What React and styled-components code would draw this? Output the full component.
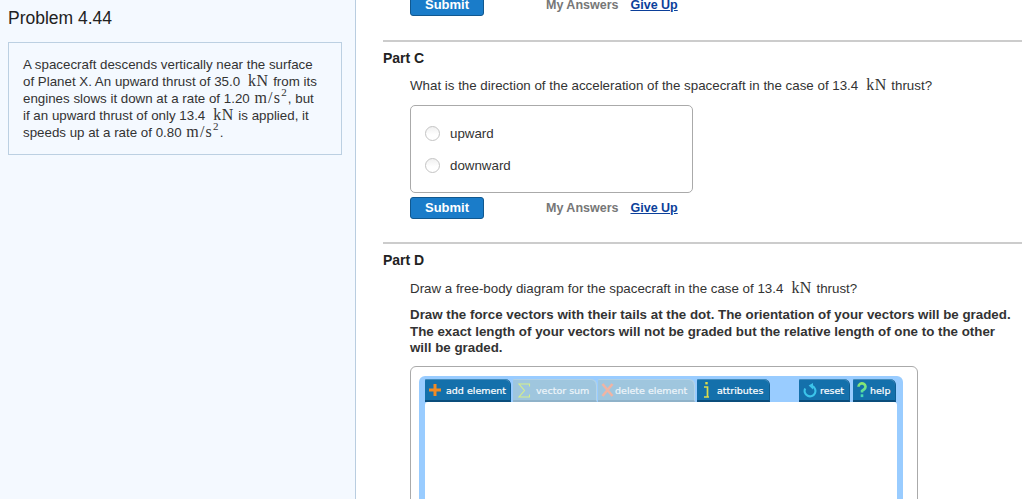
import React from 'react';
import styled, { createGlobalStyle } from 'styled-components';

// global_________________________________

const GlobalStyle = createGlobalStyle`
html, body {
    margin: 0;
    padding: 0;
    background: #fff;
}
body {
    font-family: "Liberation Sans", Arial, sans-serif;
    color: #333;
    overflow: hidden;
}`;

// styled-components_________________________________

const Page = styled.div`
display: flex;
width: 1024px;
height: 499px;
overflow: hidden;`;

const Sidebar = styled.aside`
box-sizing: border-box;
flex: 0 0 356px;
height: 499px;
background-color: #f4f9ff;
border-right: 1px solid #b9cde0;
padding: 8px 13px 0 8px;`;

const Title = styled.h1`
margin: 0;
font-size: 17.5px;
line-height: 20px;
font-weight: 400;
color: #222;`;

const ProblemBox = styled.div`
box-sizing: border-box;
margin-top: 14px;
width: 334px;
height: 113px;
padding: 13px 8px 0 14px;
border: 1px solid #bcd0e2;
font-size: 13.33px;
line-height: 17px;
color: #333;
white-space: nowrap;`;

const Main = styled.main`
flex: 1;
padding: 0 2px 0 27px;
margin-top: -7px;`;

const Actions = styled.div`
display: flex;
align-items: center;
height: 23px;
margin: ${props => props.$top || 0}px 0 0 27px;`;

const SubmitButton = styled.div`
box-sizing: border-box;
width: 74px;
height: 22px;
display: flex;
align-items: center;
justify-content: center;
background-color: #1a7cc9;
border: 1px solid #11588f;
border-radius: 3px;
color: #fff;
font-size: 13px;
font-weight: 700;`;

const MyAnswers = styled.span`
margin-left: 62px;
color: #777;
font-size: 12.5px;
font-weight: 700;`;

const GiveUp = styled.a`
margin-left: 12px;
color: #0b3f9a;
font-size: 12.5px;
font-weight: 700;
text-decoration: underline;`;

const Part = styled.section`
margin-top: ${props => props.$gap}px;
border-top: 2px solid #ccc;`;

const PartTitle = styled.h2`
margin: 8px 0 0;
font-size: 14px;
line-height: 16px;
font-weight: 700;
color: #222;`;

const Body = styled.div`
margin-left: 27px;`;

const Question = styled.p`
margin: ${props => props.$top}px 0 0;
font-size: 13.33px;
line-height: 18px;
color: #333;`;

const Instructions = styled.p`
margin: 9px 0 0;
max-width: 606px;
font-size: 13.33px;
line-height: 16.5px;
font-weight: 700;
color: #333;`;

const Unit = styled.span`
font-family: "Liberation Serif", serif;
font-size: 16px;
line-height: 0;
letter-spacing: ${props => props.$tight ? 1.2 : 0.4}px;
margin: 0 ${props => props.$tight ? 0 : 1}px 0 ${props => props.$tight ? 1 : 8}px;`;

const Sup = styled.sup`
font-size: 11px;
line-height: 0;
vertical-align: 7px;`;

const Choices = styled.div`
box-sizing: border-box;
margin-top: 10px;
width: 283px;
height: 88px;
padding-top: 11px;
background: #fff;
border: 1px solid #aaa;
border-radius: 5px;`;

const Choice = styled.label`
display: flex;
align-items: center;
height: 32px;
padding-left: 14px;
font-size: 13.33px;
color: #333;`;

const Radio = styled.span`
box-sizing: border-box;
width: 15px;
height: 15px;
margin-right: 10px;
border: 1px solid #c4c4c4;
border-radius: 50%;
background: linear-gradient(#f0f0f0, #fff 60%);`;

const DiagramFrame = styled.div`
box-sizing: border-box;
margin-top: 9px;
width: 508px;
height: 150px;
padding: 9px 0 0 8px;
border: 1px solid #aaa;
border-radius: 6px;`;

const Tool = styled.div`
box-sizing: border-box;
width: 484px;
height: 130px;
padding: 3px 6px 0 6px;
background-color: #99ccff;
border-radius: 6px 6px 0 0;`;

const ToolBar = styled.div`
display: flex;
height: 23px;`;

const ToolButton = styled.div`
box-sizing: border-box;
display: flex;
align-items: center;
width: ${props => props.$w}px;
margin-left: ${props => props.$gap || 0}px;
height: 23px;
padding: 2px 0 0 ${props => props.$pad || 0}px;
background-color: ${props => props.$off ? '#9fc6de' : '#1470ab'};
border-bottom: 2px solid ${props => props.$off ? '#8fb2c9' : '#0a4d7c'};
border-right: 1px solid ${props => props.$off ? '#b6d4e6' : '#0f5e92'};
border-radius: 1px 6px 0 0;
box-shadow: inset 0 1px 0 rgba(255, 255, 255, 0.2);
color: ${props => props.$off ? '#eef5fa' : '#fff'};
font-family: "DejaVu Sans", Verdana, sans-serif;
font-size: 9.5px;
-webkit-text-stroke: 0.2px currentColor;
white-space: nowrap;`;

const Canvas = styled.div`
height: 104px;
background: #fff;
border-radius: 3px 3px 0 0;`;

const ToolIcon = styled.svg`
flex: none;
margin-right: ${props => props.$mr || 0}px;`;

// components_________________________________

function PlusIcon() {
    return (
        <ToolIcon width="14" height="14" viewBox="0 0 14 14" $mr={4}>
            <path d="M7 1v12M1 7h12" stroke="#f08a24" strokeWidth="3" />
        </ToolIcon>
    );
}

function SigmaIcon() {
    return (
        <ToolIcon width="13" height="15" viewBox="0 0 13 15" $mr={5}>
            <path d="M11.500 3.500V1H1l5.500 6.500L1 14h10.500v-2.500" fill="none" stroke="#d6ee8c" strokeWidth="1.100" />
        </ToolIcon>
    );
}

function CrossIcon() {
    return (
        <ToolIcon width="13" height="14" viewBox="0 0 13 14" $mr={1}>
            <path d="M1.500 1l10 12M11.500 1l-10 12" stroke="#f0b4a4" strokeWidth="2.600" />
        </ToolIcon>
    );
}

function InfoIcon() {
    return (
        <ToolIcon width="7" height="16" viewBox="0 0 7 16" $mr={7}>
            <rect x="2.300" y="0" width="2.400" height="2.400" fill="#dcdc4c" />
            <path d="M1 5h3.500v9.500M1 15h5" fill="none" stroke="#dcdc4c" strokeWidth="1.700" />
        </ToolIcon>
    );
}

function ResetIcon() {
    return (
        <ToolIcon width="14" height="15" viewBox="0 0 14 15" $mr={3}>
            <path d="M2.200 5.500a5.400 5.400 0 1 0 7-2.500" fill="none" stroke="#3cc4ea" strokeWidth="2.100" />
            <path d="M10 0v6.500L5.600 2.600z" fill="#3cc4ea" />
        </ToolIcon>
    );
}

function HelpGlyph() {
    return (
        <ToolIcon width="10" height="16" viewBox="0 0 10 16" $mr={3}>
            <defs>
                <linearGradient id="helpFill" gradientUnits="userSpaceOnUse" x1="0" y1="0" x2="0" y2="16">
                    <stop offset="0" stopColor="#8fe86a" />
                    <stop offset="1" stopColor="#3cd6c0" />
                </linearGradient>
            </defs>
            <path d="M1.500 4.800a3.500 3.300 0 1 1 5.600 2.600L5 9v1.500" fill="none" stroke="url(#helpFill)" strokeWidth="2.600" />
            <rect x="3.700" y="12.300" width="2.600" height="2.800" fill="url(#helpFill)" />
        </ToolIcon>
    );
}

function ActionRow({ top }) {
    return (
        <Actions $top={top}>
            <SubmitButton>Submit</SubmitButton>
            <MyAnswers>My Answers</MyAnswers>
            <GiveUp>Give Up</GiveUp>
        </Actions>
    );
}

function MetersPerSquare() {
    return <Unit $tight>m/s<Sup>2</Sup></Unit>;
}

function App() {
    return (
        <Page>
            <GlobalStyle />
            <Sidebar>
                <Title>Problem 4.44</Title>
                <ProblemBox>
                    A spacecraft descends vertically near the surface<br />
                    of Planet X. An upward thrust of 35.0<Unit>kN</Unit> from its<br />
                    engines slows it down at a rate of 1.20 <MetersPerSquare />, but<br />
                    if an upward thrust of only 13.4<Unit>kN</Unit> is applied, it<br />
                    speeds up at a rate of 0.80 <MetersPerSquare />.
                </ProblemBox>
            </Sidebar>
            <Main>
                <ActionRow />
                <Part $gap={24}>
                    <PartTitle>Part C</PartTitle>
                    <Body>
                        <Question $top={11}>
                            What is the direction of the acceleration of the spacecraft in the case of 13.4<Unit>kN</Unit> thrust?
                        </Question>
                        <Choices>
                            <Choice><Radio />upward</Choice>
                            <Choice><Radio />downward</Choice>
                        </Choices>
                    </Body>
                    <ActionRow top={3} />
                </Part>
                <Part $gap={23}>
                    <PartTitle>Part D</PartTitle>
                    <Body>
                        <Question $top={12}>
                            Draw a free-body diagram for the spacecraft in the case of 13.4<Unit>kN</Unit> thrust?
                        </Question>
                        <Instructions>
                            Draw the force vectors with their tails at the dot. The orientation of your vectors will be graded. The exact length of your vectors will not be graded but the relative length of one to the other will be graded.
                        </Instructions>
                        <DiagramFrame>
                            <Tool>
                                <ToolBar>
                                    <ToolButton $w={86} $pad={3}><PlusIcon />add element</ToolButton>
                                    <ToolButton $w={84} $gap={2} $pad={5} $off><SigmaIcon />vector sum</ToolButton>
                                    <ToolButton $w={97} $gap={1} $pad={3} $off><CrossIcon />delete element</ToolButton>
                                    <ToolButton $w={73} $gap={2} $pad={6}><InfoIcon />attributes</ToolButton>
                                    <ToolButton $w={51} $gap={29} $pad={4}><ResetIcon />reset</ToolButton>
                                    <ToolButton $w={43} $gap={3} $pad={4}><HelpGlyph />help</ToolButton>
                                </ToolBar>
                                <Canvas />
                            </Tool>
                        </DiagramFrame>
                    </Body>
                </Part>
            </Main>
        </Page>
    );
}

export default App;
